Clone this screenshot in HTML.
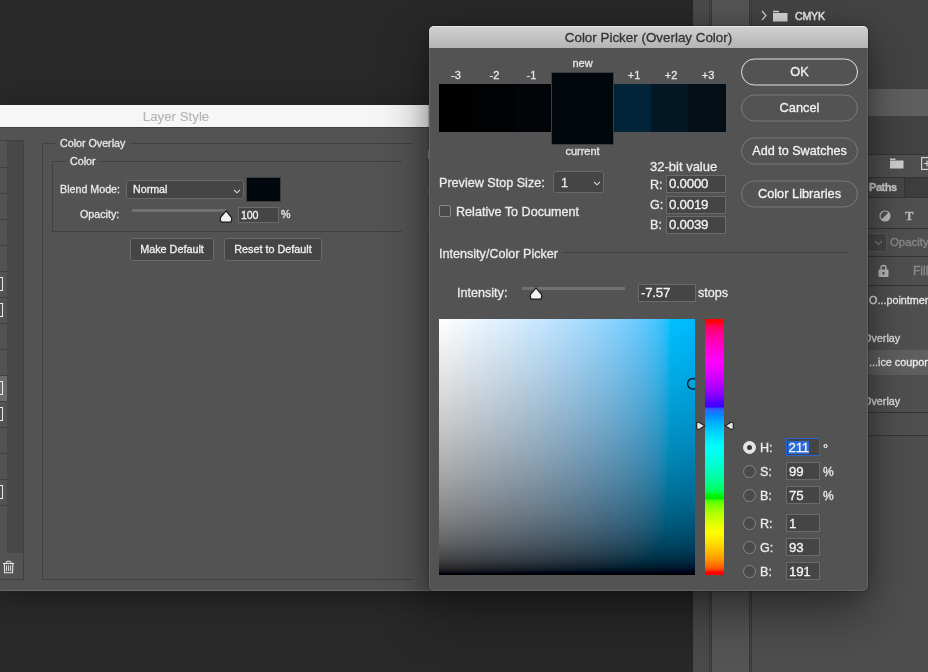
<!DOCTYPE html>
<html><head><meta charset="utf-8"><title>Color Picker</title>
<style>
*{box-sizing:border-box;margin:0;padding:0}
html,body{width:928px;height:672px;overflow:hidden;background:#282828;font-family:"Liberation Sans",sans-serif;font-size:12px;color:#e6e6e6;-webkit-text-stroke:0.3px}
.a{position:absolute}
.t{position:absolute;white-space:nowrap;line-height:14px;height:14px}
.c{text-align:center}
/* right panels */
#rp,#ls,#cp{will-change:transform}
#rp{left:693px;top:0;width:235px;height:672px;background:#4a4a4a;overflow:hidden}
.hl{position:absolute;height:1px;background:#353535}
/* layer style */
#ls{left:0;top:105px;width:440px;height:486px;background:#535353;box-shadow:0 6px 22px rgba(0,0,0,.32);border-bottom:1px solid #6a6a6a}
#lst{left:0;top:0;width:100%;height:22px;background:#f6f6f6}
.ln{position:absolute;background:#414141}
.btn{position:absolute;height:23px;border:1px solid #6b6b6b;border-radius:3px;background:#454545;color:#f0f0f0;text-align:center;line-height:21px;font-size:10.8px}
.fld{position:absolute;background:#454545;border:1px solid #6a6a6a;color:#f4f4f4;font-size:13.3px;letter-spacing:-0.25px;line-height:16px;padding-left:2px;height:18px;white-space:nowrap}
.f2{line-height:18px}
.ls11{font-size:10.7px;color:#e8e8e8}
/* color picker */
#cp{left:429px;top:26px;width:439px;height:565px;background:#535353;border-radius:5px;box-shadow:inset 0 0 0 1px rgba(255,255,255,.1),0 22px 50px rgba(0,0,0,.42),0 2px 22px rgba(0,0,0,.22),0 0 0 1px rgba(0,0,0,.18)}
#cpt{left:0;top:0;width:100%;height:22px;padding-top:1px;border-radius:5px 5px 0 0;background:linear-gradient(#d0d0d0,#b4b4b4);border-top:1px solid #e8e8e8;color:#333;text-align:center;font-size:13.4px;line-height:20px}
.pill{position:absolute;transform:translateY(.5px);left:312px;width:117px;height:27px;border:1px solid #7a7a7a;border-radius:14px;text-align:center;line-height:25px;font-size:12.8px;color:#f2f2f2}
.radio{position:absolute;left:314px;width:13px;height:13px;border-radius:50%;border:1px solid #858585;background:#4a4a4a}
#rows i{display:block;width:256px}
.cpl{font-size:12.6px;color:#ececec}
.sm{font-size:11px;color:#e6e6e6}
.pb{left:-12px;width:15px;height:14px;border:1px solid #eaeaea}
</style></head><body>

<!-- right panels -->
<div class="a" id="rp">
  <div class="a" style="left:16px;top:0;width:3px;height:672px;background:#383838"></div><div class="a" style="left:17px;top:0;width:1px;height:672px;background:#484848"></div>
  <div class="a" style="left:19px;top:0;width:37px;height:672px;background:#545454"></div>
  <div class="a" style="left:56px;top:0;width:3px;height:672px;background:#383838"></div><div class="a" style="left:57px;top:0;width:1px;height:672px;background:#484848"></div>
  <div class="a" style="left:59px;top:0;width:176px;height:154px;background:#434343"></div>
  <div class="hl" style="left:59px;top:30px;width:176px;background:#444"></div>
  <div class="hl" style="left:59px;top:58px;width:176px;background:#444"></div>
  <div class="a" style="left:59px;top:89px;width:176px;height:27px;background:#606060"></div>
  <!-- CMYK row -->
  <svg class="a" style="left:67px;top:10px" width="8" height="11" viewBox="0 0 8 11"><path d="M2 1 L6 5.5 L2 10" fill="none" stroke="#d0d0d0" stroke-width="1.2"/></svg>
  <svg class="a" style="left:80px;top:10px" width="15" height="12" viewBox="0 0 15 12"><path d="M0 0.8h6v1.4h-6z M0 3h14.5v8.5h-14.5z" fill="#d4d4d4"/></svg>
  <div class="t" style="left:102px;top:9px;font-size:10.6px;-webkit-text-stroke:0.5px;color:#e4e4e4;letter-spacing:-.2px">CMYK</div>
  <!-- layers panel -->
  <div class="a" style="left:59px;top:154px;width:176px;height:518px;background:#505050"></div>
  <div class="hl" style="left:59px;top:154px;width:176px"></div>
  <div class="hl" style="left:59px;top:177px;width:176px"></div>
  <div class="a" style="left:59px;top:178px;width:153px;height:19px;background:#474747"></div><div class="a" style="left:211px;top:178px;width:24px;height:19px;background:#3e3e3e"></div>
  <div class="a" style="left:211px;top:178px;width:1px;height:19px;background:#353535"></div>
  <div class="hl" style="left:59px;top:197px;width:176px"></div>
  <div class="hl" style="left:59px;top:228px;width:176px"></div>
  <div class="hl" style="left:59px;top:256px;width:176px"></div>
  <div class="hl" style="left:59px;top:285px;width:176px"></div>
  <div class="a" style="left:59px;top:350px;width:176px;height:25px;background:#606060"></div>
  <div class="hl" style="left:59px;top:412px;width:176px"></div>
  <div class="hl" style="left:59px;top:435px;width:176px"></div>
  <div class="a" style="left:59px;top:436px;width:176px;height:236px;background:#4e4e4e"></div>
  <!-- icons -->
  <svg class="a" style="left:197px;top:158px" width="14" height="11" viewBox="0 0 14 11"><path d="M0 0.5h5.5v1.5h-5.5z M0 2.6h13.5v8h-13.5z" fill="#cfcfcf"/></svg>
  <svg class="a" style="left:228px;top:157px" width="12" height="13" viewBox="0 0 12 13"><rect x=".6" y=".6" width="12" height="11.8" fill="none" stroke="#cfcfcf" stroke-width="1.2"/><path d="M6 3.5v6M3 6.5h6" stroke="#cfcfcf" stroke-width="1.2"/></svg>
  <div class="t" style="left:176px;top:180px;font-size:11px;font-weight:bold;letter-spacing:-.45px;color:#cacaca;-webkit-text-stroke:.35px">Paths</div>
  <svg class="a" style="left:186px;top:210px" width="12" height="12" viewBox="0 0 12 12"><circle cx="6" cy="6" r="5" fill="none" stroke="#bdbdbd" stroke-width="1.2"/><path d="M9.6 2.4 A5 5 0 0 1 2.4 9.6 Z" fill="#bdbdbd"/></svg>
  <div class="t" style="left:212px;top:207px;font-family:'Liberation Serif',serif;font-weight:bold;font-size:12.5px;line-height:18px;height:18px;color:#bdbdbd">T</div>
  <div class="a" style="left:173px;top:233px;width:21px;height:19px;border:1px solid #5c5c5c;border-radius:3px;background:#464646"></div>
  <svg class="a" style="left:181px;top:240px" width="9" height="6" viewBox="0 0 9 6"><path d="M1 1 L4.5 4.5 L8 1" fill="none" stroke="#7d7d7d" stroke-width="1.2"/></svg>
  <div class="t" style="left:197px;top:235px;font-size:11.4px;color:#8c8c8c">Opacity</div>
  <svg class="a" style="left:185px;top:264px" width="11" height="13" viewBox="0 0 11 13"><path d="M3 6V4a2.5 2.5 0 0 1 5 0v2" fill="none" stroke="#b8b8b8" stroke-width="1.5"/><rect x="0.5" y="5.5" width="10" height="7.5" rx="1" fill="#b8b8b8"/><rect x="4.6" y="8" width="1.8" height="2.6" fill="#4a4a4a"/></svg>
  <div class="t" style="left:220px;top:264px;font-size:12px;color:#8c8c8c">Fill:</div>
  <div class="t" style="left:176px;top:293px;font-size:10.8px;color:#ececec">O...pointmen</div>
  <div class="t" style="left:170px;top:331px;font-size:10.8px;color:#e0e0e0">Overlay</div>
  <div class="t" style="left:176px;top:355px;font-size:10.8px;color:#f0f0f0">...ice coupon</div>
  <div class="t" style="left:170px;top:394px;font-size:10.8px;color:#e0e0e0">Overlay</div>
</div>

<!-- Layer Style dialog -->
<div class="a" id="ls">
  <div class="a" id="lst"></div>
  <div class="t c" style="left:101px;width:150px;top:5px;font-size:13.3px;color:#b4b4b4;-webkit-text-stroke:.1px">Layer Style</div>
  <div class="ln" style="left:0;top:22px;width:440px;height:1px;background:#404040"></div>
  <!-- left list -->
  <div class="a" style="left:7px;top:36px;width:16px;height:412px;background:#484848"></div>
  <div class="ln" style="left:0;top:35px;width:24px;height:1px"></div>
  <div class="ln" style="left:23px;top:35px;width:1px;height:440px"></div>
  <div class="ln" style="left:0;top:474px;width:24px;height:1px"></div>
  <div class="a" style="left:0;top:271px;width:7px;height:25px;background:#6b6b6b"></div>
  <div class="ln" style="left:0;top:62px;width:7px;height:1px"></div><div class="ln" style="left:0;top:88px;width:7px;height:1px"></div><div class="ln" style="left:0;top:114px;width:7px;height:1px"></div><div class="ln" style="left:0;top:140px;width:7px;height:1px"></div><div class="ln" style="left:0;top:166px;width:7px;height:1px"></div><div class="ln" style="left:0;top:192px;width:7px;height:1px"></div><div class="ln" style="left:0;top:218px;width:7px;height:1px"></div><div class="ln" style="left:0;top:244px;width:7px;height:1px"></div><div class="ln" style="left:0;top:270px;width:7px;height:1px"></div><div class="ln" style="left:0;top:296px;width:7px;height:1px"></div><div class="ln" style="left:0;top:322px;width:7px;height:1px"></div><div class="ln" style="left:0;top:348px;width:7px;height:1px"></div><div class="ln" style="left:0;top:374px;width:7px;height:1px"></div><div class="ln" style="left:0;top:400px;width:7px;height:1px"></div>
  <!-- plus boxes -->
  <div class="a pb" style="top:172px"></div><div class="a pb" style="top:198px"></div><div class="a pb" style="top:276px"></div><div class="a pb" style="top:302px"></div><div class="a pb" style="top:380px"></div>
  <!-- trash -->
  <svg class="a" style="left:3px;top:455px" width="12" height="14" viewBox="0 0 12 14"><g fill="none" stroke="#e8e8e8"><path d="M0 3.5H11.2" stroke-width="1.1"/><path d="M3.3 3.5V2 Q3.3 1.3 4 1.3H7.3Q8 1.3 8 2V3.5" stroke-width="1"/><path d="M1.4 4 L1.6 12.7H9.6L9.8 4" stroke-width="1.1"/><path d="M3.55 5.3v5.8M5.6 5.3v5.8M7.65 5.3v5.8" stroke-width=".95"/></g></svg>
  <!-- fieldsets -->
  <div class="a" style="left:42px;top:38px;width:371px;height:437px;border:1px solid #414141;border-right:none"></div>
  <div class="a" style="left:55px;top:30px;width:75px;height:16px;background:#535353"></div>
  <div class="t ls11" style="left:60px;top:31px">Color Overlay</div>
  <div class="a" style="left:52px;top:56px;width:350px;height:71px;border:1px solid #414141;border-right:none"></div>
  <div class="a" style="left:66px;top:48px;width:34px;height:16px;background:#535353"></div>
  <div class="t ls11" style="left:70px;top:49px">Color</div>
  <div class="t ls11" style="left:60px;top:77px">Blend Mode:</div>
  <div class="a" style="left:126px;top:75px;width:118px;height:19px;background:#454545;border:1px solid #686868;border-radius:3px"></div>
  <div class="t ls11" style="left:133px;top:77px;color:#f2f2f2">Normal</div>
  <svg class="a" style="left:233px;top:84px" width="8" height="5" viewBox="0 0 8 5"><path d="M1 0.8 L4 3.8 L7 0.8" fill="none" stroke="#e0e0e0" stroke-width="1.1"/></svg>
  <div class="a" style="left:246px;top:72px;width:35px;height:25px;background:#02060d;border:1px solid #3c3c3c"></div>
  <div class="t ls11" style="left:80px;top:102px">Opacity:</div>
  <div class="a" style="left:132px;top:104px;width:94px;height:3px;background:#717171"></div>
  <svg class="a" style="left:219px;top:105px" width="14" height="13" viewBox="0 0 14 13"><path d="M7 0.9 L1.4 7.7 V10.2 Q1.4 12.1 3.4 12.1 H10.6 Q12.6 12.1 12.6 10.2 V7.7 Z" fill="#f0f0f0" stroke="#1c1c1c" stroke-width="1.2" stroke-linejoin="round"/></svg>
  <div class="fld" style="left:238px;top:102px;width:41px;height:16px;font-size:10.7px;line-height:14px">100</div>
  <div class="t ls11" style="left:281px;top:102px">%</div>
  <div class="btn" style="left:130px;top:133px;width:84px">Make Default</div>
  <div class="btn" style="left:224px;top:133px;width:98px">Reset to Default</div>
  <!-- shadow cast by picker -->
  <div class="a" style="left:428px;top:45px;width:1px;height:9px;background:#a4a4a4;border-radius:1px"></div><div class="a" style="left:428px;top:82px;width:1px;height:8px;background:#686868"></div><div class="a" style="left:428px;top:118px;width:1px;height:8px;background:#626262"></div>
</div>

<!-- Color Picker dialog -->
<div class="a" id="cp">
  <div class="a" id="cpt">Color Picker (Overlay Color)</div>
  <!-- swatches -->
  <div class="a" style="left:10px;top:58px;width:38px;height:48px;background:#010102"></div>
  <div class="a" style="left:48px;top:58px;width:37px;height:48px;background:#010203"></div>
  <div class="a" style="left:85px;top:58px;width:37px;height:48px;background:#020408"></div>
  <div class="a" style="left:184px;top:58px;width:38px;height:48px;background:#032339"></div>
  <div class="a" style="left:222px;top:58px;width:37px;height:48px;background:#031623"></div>
  <div class="a" style="left:259px;top:58px;width:38px;height:48px;background:#030e17"></div>
  <div class="a" style="left:122px;top:46px;width:63px;height:73px;background:#02070e;border:1px solid #3d3d3d"></div>
  <div class="t sm c" style="left:10px;width:34px;top:42px">-3</div>
  <div class="t sm c" style="left:48px;width:35px;top:42px">-2</div>
  <div class="t sm c" style="left:85px;width:35px;top:42px">-1</div>
  <div class="t sm c" style="left:186px;width:38px;top:42px">+1</div>
  <div class="t sm c" style="left:223px;width:38px;top:42px">+2</div>
  <div class="t sm c" style="left:260px;width:38px;top:42px">+3</div>
  <div class="t sm c" style="left:122px;width:63px;top:30px">new</div>
  <div class="t sm c" style="left:122px;width:63px;top:118px">current</div>
  <!-- buttons -->
  <div class="pill" style="top:32px;border:1.5px solid #e4e4e4;line-height:24px">OK</div>
  <div class="pill" style="top:68px;line-height:24px">Cancel</div>
  <div class="pill" style="top:111px;font-size:12.6px">Add to Swatches</div>
  <div class="pill" style="top:154px;line-height:24px">Color Libraries</div>
  <!-- preview stop -->
  <div class="t cpl" style="left:10px;top:150px">Preview Stop Size:</div>
  <div class="a" style="left:124px;top:145px;width:51px;height:22px;background:#454545;border:1px solid #6a6a6a;border-radius:3px"></div>
  <div class="t cpl" style="left:132px;top:150px">1</div>
  <svg class="a" style="left:164px;top:155px" width="8" height="5" viewBox="0 0 8 5"><path d="M1 0.8 L4 3.8 L7 0.8" fill="none" stroke="#e0e0e0" stroke-width="1.1"/></svg>
  <div class="a" style="left:10px;top:179px;width:12px;height:12px;border:1px solid #8a8a8a;border-radius:2px;background:#4a4a4a"></div>
  <div class="t cpl" style="left:27px;top:179px">Relative To Document</div>
  <div class="t cpl" style="left:221px;top:134px;font-size:13px">32-bit value</div>
  <div class="t cpl" style="left:221px;top:152px">R:</div>
  <div class="t cpl" style="left:221px;top:172px">G:</div>
  <div class="t cpl" style="left:221px;top:192px">B:</div>
  <div class="fld" style="left:237px;top:149px;width:60px">0.0000</div>
  <div class="fld" style="left:237px;top:170px;width:60px">0.0019</div>
  <div class="fld" style="left:237px;top:190px;width:60px">0.0039</div>
  <!-- section -->
  <div class="t cpl" style="left:10px;top:221px">Intensity/Color Picker</div>
  <div class="a" style="left:134px;top:226px;width:285px;height:1px;background:#414141"></div>
  <div class="t cpl" style="left:28px;top:260px">Intensity:</div>
  <div class="a" style="left:93px;top:261px;width:103px;height:3px;background:#717171"></div>
  <svg class="a" style="left:100px;top:261px" width="14" height="13" viewBox="0 0 14 13"><path d="M7 0.9 L1.4 7.7 V10.2 Q1.4 12.1 3.4 12.1 H10.6 Q12.6 12.1 12.6 10.2 V7.7 Z" fill="#f0f0f0" stroke="#1c1c1c" stroke-width="1.2" stroke-linejoin="round"/></svg>
  <div class="fld" style="left:209px;top:258px;width:58px">-7.57</div>
  <div class="t cpl" style="left:269px;top:260px">stops</div>
  <!-- field + hue -->
  <div class="a" id="field" style="left:10px;top:293px;width:256px;height:256px;overflow:hidden;background:#000"><div class="a" id="rows" style="left:0;top:0;width:256px;height:256px"><i style="height:4px;background:linear-gradient(90deg,#fefefe 0.0%,#f1f8fe 10.0%,#e4f2fe 20.0%,#d5ecfe 30.0%,#c4e5fe 40.0%,#b2defe 50.0%,#9cd7fe 60.0%,#82d0fe 70.0%,#7bcefe 72.4%,#61c9fe 79.4%,#5fc8fe 80.0%,#49c5fe 84.4%,#33c2fe 87.4%,#1ec1fe 89.2%,#0fc0fe 90.0%,#00c0fe 90.4%,#00b7fe 100.0%)"></i><i style="height:4px;background:linear-gradient(90deg,#fcfcfc 0.0%,#f0f6fc 10.0%,#e2f0fc 20.0%,#d3eafc 30.0%,#c3e4fc 40.0%,#b0ddfc 50.0%,#9bd6fc 60.0%,#81cffc 70.0%,#7acdfc 72.4%,#61c7fc 79.4%,#5ec7fc 80.0%,#48c3fc 84.4%,#32c1fc 87.4%,#1ebffc 89.2%,#0fbffc 90.0%,#00befc 90.4%,#00b6fc 100.0%)"></i><i style="height:4px;background:linear-gradient(90deg,#fbfbfb 0.0%,#eef5fb 10.0%,#e0effb 20.0%,#d2e8fb 30.0%,#c1e2fb 40.0%,#afdbfb 50.0%,#9ad4fb 60.0%,#80cdfb 70.0%,#79cbfb 72.4%,#60c6fb 79.4%,#5ec5fb 80.0%,#47c2fb 84.4%,#32bffb 87.4%,#1ebefb 89.2%,#0fbdfb 90.0%,#00bdfb 90.4%,#00b5fb 100.0%)"></i><i style="height:4px;background:linear-gradient(90deg,#f9f9f9 0.0%,#ecf3f9 10.0%,#dfedf9 20.0%,#d0e7f9 30.0%,#c0e0f9 40.0%,#aedaf9 50.0%,#99d3f9 60.0%,#7fccf9 70.0%,#78caf9 72.4%,#5fc4f9 79.4%,#5dc4f9 80.0%,#47c0f9 84.4%,#32bef9 87.4%,#1dbdf9 89.2%,#0ebcf9 90.0%,#00bcf9 90.4%,#00b3f9 100.0%)"></i><i style="height:4px;background:linear-gradient(90deg,#f7f7f7 0.0%,#eaf1f7 10.0%,#ddebf7 20.0%,#cfe5f7 30.0%,#bfdff7 40.0%,#add8f7 50.0%,#98d1f7 60.0%,#7ecaf7 70.0%,#77c8f7 72.4%,#5ec3f7 79.4%,#5cc2f7 80.0%,#46bff7 84.4%,#31bdf7 87.4%,#1dbbf7 89.2%,#0ebbf7 90.0%,#00baf7 90.4%,#00b2f7 100.0%)"></i><i style="height:4px;background:linear-gradient(90deg,#f5f5f5 0.0%,#e9eff5 10.0%,#dbe9f5 20.0%,#cde3f5 30.0%,#bdddf5 40.0%,#abd6f5 50.0%,#97d0f5 60.0%,#7dc8f5 70.0%,#76c7f5 72.4%,#5ec1f5 79.4%,#5bc1f5 80.0%,#46bef5 84.4%,#31bbf5 87.4%,#1dbaf5 89.2%,#0db9f5 90.0%,#00b9f5 90.4%,#00b1f5 100.0%)"></i><i style="height:4px;background:linear-gradient(90deg,#f3f3f3 0.0%,#e7eef3 10.0%,#dae8f3 20.0%,#cbe2f3 30.0%,#bcdbf3 40.0%,#aad5f3 50.0%,#95cef3 60.0%,#7cc7f3 70.0%,#75c5f3 72.4%,#5dc0f3 79.4%,#5abff3 80.0%,#45bcf3 84.4%,#30baf3 87.4%,#1cb8f3 89.2%,#0db8f3 90.0%,#00b7f3 90.4%,#00aff3 100.0%)"></i><i style="height:4px;background:linear-gradient(90deg,#f1f1f1 0.0%,#e5ecf1 10.0%,#d8e6f1 20.0%,#cae0f1 30.0%,#badaf1 40.0%,#a8d3f1 50.0%,#94ccf1 60.0%,#7bc5f1 70.0%,#74c4f1 72.4%,#5cbef1 79.4%,#5abef1 80.0%,#44bbf1 84.4%,#30b8f1 87.4%,#1cb7f1 89.2%,#0db6f1 90.0%,#00b6f1 90.4%,#00aef1 100.0%)"></i><i style="height:4px;background:linear-gradient(90deg,#efefef 0.0%,#e3eaef 10.0%,#d6e4ef 20.0%,#c8deef 30.0%,#b9d8ef 40.0%,#a7d1ef 50.0%,#93cbef 60.0%,#7ac4ef 70.0%,#73c2ef 72.4%,#5bbdef 79.4%,#59bcef 80.0%,#44b9ef 84.4%,#2fb7ef 87.4%,#1cb5ef 89.2%,#0cb5ef 90.0%,#00b4ef 90.4%,#00adef 100.0%)"></i><i style="height:4px;background:linear-gradient(90deg,#ededee 0.0%,#e1e8ee 10.0%,#d5e2ee 20.0%,#c7dcee 30.0%,#b7d6ee 40.0%,#a6d0ee 50.0%,#92c9ee 60.0%,#79c2ee 70.0%,#72c0ee 72.4%,#5bbbee 79.4%,#58bbee 80.0%,#43b8ee 84.4%,#2fb5ee 87.4%,#1cb4ee 89.2%,#0cb3ee 90.0%,#00b3ee 90.4%,#00abee 100.0%)"></i><i style="height:4px;background:linear-gradient(90deg,#ececec 0.0%,#e0e6ec 10.0%,#d3e0ec 20.0%,#c5daec 30.0%,#b6d4ec 40.0%,#a4ceec 50.0%,#90c7ec 60.0%,#78c1ec 70.0%,#71bfec 72.3%,#5abaec 79.3%,#57b9ec 80.0%,#43b6ec 84.3%,#2eb4ec 87.3%,#1bb2ec 89.1%,#0cb2ec 89.9%,#00b1ec 90.3%,#00aaec 100.0%)"></i><i style="height:4px;background:linear-gradient(90deg,#eaeaea 0.0%,#dee4ea 10.0%,#d1deea 20.0%,#c3d9ea 30.0%,#b4d3ea 40.0%,#a3ccea 50.0%,#8fc6ea 60.0%,#77bfea 70.0%,#70bdea 72.3%,#59b8ea 79.3%,#56b8ea 80.0%,#42b5ea 84.3%,#2eb2ea 87.3%,#1bb1ea 89.1%,#0cb0ea 89.9%,#00b0ea 90.3%,#00a8ea 100.0%)"></i><i style="height:4px;background:linear-gradient(90deg,#e8e8e8 0.0%,#dce2e8 10.0%,#cfdde8 20.0%,#c2d7e8 30.0%,#b2d1e8 40.0%,#a1cbe8 50.0%,#8ec4e8 60.0%,#76bde8 70.0%,#6fbce8 72.3%,#58b7e8 79.3%,#55b6e8 80.0%,#41b3e8 84.3%,#2db1e8 87.3%,#1bafe8 89.1%,#0cafe8 89.9%,#00aee8 90.3%,#00a7e8 100.0%)"></i><i style="height:4px;background:linear-gradient(90deg,#e6e6e6 0.0%,#dae0e6 10.0%,#cddbe6 20.0%,#c0d5e6 30.0%,#b1cfe6 40.0%,#a0c9e6 50.0%,#8dc2e6 60.0%,#75bce6 70.0%,#6ebae6 72.3%,#57b5e6 79.3%,#55b5e6 80.0%,#41b1e6 84.3%,#2dafe6 87.3%,#1aaee6 89.1%,#0bade6 89.9%,#00ade6 90.3%,#00a5e6 100.0%)"></i><i style="height:4px;background:linear-gradient(90deg,#e4e4e4 0.0%,#d8dee4 10.0%,#ccd9e4 20.0%,#bed3e4 30.0%,#afcde4 40.0%,#9fc7e4 50.0%,#8bc1e4 60.0%,#74bae4 70.0%,#6db8e4 72.3%,#56b3e4 79.3%,#54b3e4 80.0%,#40b0e4 84.3%,#2caee4 87.3%,#1aace4 89.1%,#0bace4 89.9%,#00abe4 90.3%,#00a4e4 100.0%)"></i><i style="height:4px;background:linear-gradient(90deg,#e1e1e2 0.0%,#d6dce2 10.0%,#cad7e2 20.0%,#bcd1e2 30.0%,#aecbe2 40.0%,#9dc5e2 50.0%,#8abfe2 60.0%,#73b8e2 70.0%,#6cb7e2 72.3%,#56b2e2 79.3%,#53b1e2 80.0%,#3faee2 84.3%,#2cace2 87.3%,#1aabe2 89.1%,#0baae2 89.9%,#00aae2 90.3%,#00a2e2 100.0%)"></i><i style="height:4px;background:linear-gradient(90deg,#dfdfdf 0.0%,#d4dadf 10.0%,#c8d5df 20.0%,#bbcfdf 30.0%,#acc9df 40.0%,#9cc3df 50.0%,#89bddf 60.0%,#71b6df 70.0%,#6bb5df 72.3%,#55b0df 79.3%,#52b0df 80.0%,#3faddf 84.3%,#2baadf 87.3%,#19a9df 89.1%,#0ba8df 89.9%,#00a8df 90.3%,#00a1df 100.0%)"></i><i style="height:4px;background:linear-gradient(90deg,#dddddd 0.0%,#d2d8dd 10.0%,#c6d3dd 20.0%,#b9cddd 30.0%,#aac7dd 40.0%,#9ac1dd 50.0%,#87bbdd 60.0%,#70b5dd 70.0%,#6ab3dd 72.2%,#54aedd 79.2%,#51aedd 80.0%,#3eabdd 84.2%,#2ba9dd 87.2%,#19a7dd 89.0%,#0ba7dd 89.8%,#00a6dd 90.2%,#009fdd 100.0%)"></i><i style="height:4px;background:linear-gradient(90deg,#dbdbdb 0.0%,#d0d6db 10.0%,#c4d1db 20.0%,#b7cbdb 30.0%,#a9c5db 40.0%,#98c0db 50.0%,#86b9db 60.0%,#6fb3db 70.0%,#69b1db 72.2%,#53addb 79.2%,#50acdb 80.0%,#3da9db 84.2%,#2aa7db 87.2%,#19a6db 89.0%,#0aa5db 89.8%,#00a5db 90.2%,#009ddb 100.0%)"></i><i style="height:4px;background:linear-gradient(90deg,#d9d9d9 0.0%,#ced4d9 10.0%,#c2cfd9 20.0%,#b5c9d9 30.0%,#a7c3d9 40.0%,#97bed9 50.0%,#84b8d9 60.0%,#6eb1d9 70.0%,#68b0d9 72.2%,#52abd9 79.2%,#4faad9 80.0%,#3da7d9 84.2%,#2aa5d9 87.2%,#18a4d9 89.0%,#0aa3d9 89.8%,#00a3d9 90.2%,#009cd9 100.0%)"></i><i style="height:4px;background:linear-gradient(90deg,#d7d7d7 0.0%,#ccd2d7 10.0%,#c0ccd7 20.0%,#b3c7d7 30.0%,#a5c1d7 40.0%,#95bcd7 50.0%,#83b6d7 60.0%,#6dafd7 70.0%,#67aed7 72.2%,#51a9d7 79.2%,#4ea9d7 80.0%,#3ca6d7 84.2%,#29a4d7 87.2%,#18a2d7 89.0%,#0aa2d7 89.8%,#00a2d7 90.2%,#009ad7 100.0%)"></i><i style="height:4px;background:linear-gradient(90deg,#d5d5d5 0.0%,#cad0d5 10.0%,#becad5 20.0%,#b1c5d5 30.0%,#a3bfd5 40.0%,#94bad5 50.0%,#82b4d5 60.0%,#6badd5 70.0%,#66acd5 72.2%,#50a7d5 79.2%,#4da7d5 80.0%,#3ba4d5 84.2%,#29a2d5 87.2%,#17a1d5 89.0%,#0aa0d5 89.8%,#00a0d5 90.2%,#0099d5 100.0%)"></i><i style="height:4px;background:linear-gradient(90deg,#d2d2d2 0.0%,#c8cdd2 10.0%,#bcc8d2 20.0%,#afc3d2 30.0%,#a2bdd2 40.0%,#92b8d2 50.0%,#80b2d2 60.0%,#6aacd2 70.0%,#65aad2 72.2%,#4fa6d2 79.2%,#4ca5d2 80.0%,#3aa2d2 84.2%,#28a0d2 87.2%,#179fd2 89.0%,#099ed2 89.8%,#009ed2 90.2%,#0097d2 100.0%)"></i><i style="height:4px;background:linear-gradient(90deg,#d0d0d0 0.0%,#c5cbd0 10.0%,#bac6d0 20.0%,#aec1d0 30.0%,#a0bbd0 40.0%,#90b6d0 50.0%,#7fb0d0 60.0%,#69aad0 70.0%,#63a8d0 72.1%,#4ea4d0 79.1%,#4ba3d0 80.0%,#3aa0d0 84.1%,#289ed0 87.1%,#179dd0 88.9%,#099dd0 89.7%,#009cd0 90.1%,#0095d0 100.0%)"></i><i style="height:4px;background:linear-gradient(90deg,#cecece 0.0%,#c3c9ce 10.0%,#b8c4ce 20.0%,#acbfce 30.0%,#9eb9ce 40.0%,#8fb4ce 50.0%,#7daece 60.0%,#68a8ce 70.0%,#62a6ce 72.1%,#4da2ce 79.1%,#4aa1ce 80.0%,#399fce 84.1%,#279dce 87.1%,#169bce 88.9%,#099bce 89.7%,#009bce 90.1%,#0093ce 100.0%)"></i><i style="height:4px;background:linear-gradient(90deg,#cbcbcc 0.0%,#c1c6cc 10.0%,#b6c2cc 20.0%,#aabccc 30.0%,#9cb7cc 40.0%,#8db2cc 50.0%,#7caccc 60.0%,#66a6cc 70.0%,#61a4cc 72.1%,#4ca0cc 79.1%,#499fcc 80.0%,#389dcc 84.1%,#279bcc 87.1%,#169acc 88.9%,#0999cc 89.7%,#0299cc 90.0%,#0092cc 100.0%)"></i><i style="height:4px;background:linear-gradient(90deg,#c9c9c9 0.0%,#bfc4c9 10.0%,#b4bfc9 20.0%,#a8bac9 30.0%,#9ab5c9 40.0%,#8bafc9 50.0%,#7aaac9 60.0%,#65a4c9 70.0%,#60a3c9 72.1%,#4b9ec9 79.1%,#489ec9 80.0%,#379bc9 84.1%,#2699c9 87.1%,#1698c9 88.9%,#0997c9 89.7%,#0197c9 90.0%,#0090c9 100.0%)"></i><i style="height:4px;background:linear-gradient(90deg,#c6c6c7 0.0%,#bcc2c7 10.0%,#b1bdc7 20.0%,#a5b8c7 30.0%,#98b3c7 40.0%,#8aadc7 50.0%,#78a8c7 60.0%,#64a2c7 70.0%,#5fa1c7 72.0%,#4a9cc7 79.0%,#479cc7 80.0%,#3799c7 84.0%,#2597c7 87.0%,#1596c7 88.8%,#0895c7 89.6%,#0195c7 90.0%,#008ec7 100.0%)"></i><i style="height:4px;background:linear-gradient(90deg,#c4c4c4 0.0%,#babfc4 10.0%,#afbbc4 20.0%,#a3b6c4 30.0%,#96b0c4 40.0%,#88abc4 50.0%,#77a6c4 60.0%,#62a0c4 70.0%,#5d9ec4 72.0%,#499ac4 79.0%,#469ac4 80.0%,#3697c4 84.0%,#2595c4 87.0%,#1594c4 88.8%,#0893c4 89.6%,#0093c4 90.0%,#008cc4 100.0%)"></i><i style="height:4px;background:linear-gradient(90deg,#c1c1c2 0.0%,#b8bdc2 10.0%,#adb8c2 20.0%,#a1b3c2 30.0%,#94aec2 40.0%,#86a9c2 50.0%,#75a3c2 60.0%,#619ec2 70.0%,#5c9cc2 72.0%,#4898c2 79.0%,#4598c2 80.0%,#3595c2 84.0%,#2493c2 87.0%,#1492c2 88.8%,#0891c2 89.6%,#0091c2 90.0%,#008ac2 100.0%)"></i><i style="height:4px;background:linear-gradient(90deg,#bfbfbf 0.0%,#b5babf 10.0%,#abb6bf 20.0%,#9fb1bf 30.0%,#92acbf 40.0%,#84a7bf 50.0%,#74a1bf 60.0%,#5f9bbf 70.0%,#5b9abf 72.0%,#4796bf 79.0%,#4495bf 80.0%,#3493bf 84.0%,#2491bf 87.0%,#1490bf 88.8%,#088fbf 89.6%,#008fbf 90.0%,#0089bf 100.0%)"></i><i style="height:4px;background:linear-gradient(90deg,#bcbcbd 0.0%,#b3b8bd 10.0%,#a8b3bd 20.0%,#9daebd 30.0%,#90a9bd 40.0%,#82a4bd 50.0%,#729fbd 60.0%,#5e99bd 70.0%,#5998bd 71.9%,#4694bd 78.9%,#4393bd 80.0%,#3391bd 83.9%,#238fbd 86.9%,#138ebd 88.7%,#078dbd 89.5%,#008dbd 89.9%,#0087bd 100.0%)"></i><i style="height:2px;background:linear-gradient(90deg,#bababb 0.0%,#b1b6bb 10.0%,#a6b1bb 20.0%,#9badbb 30.0%,#8fa8bb 40.0%,#81a3bb 50.0%,#719dbb 60.0%,#5d98bb 70.0%,#5897bb 71.9%,#4592bb 78.9%,#4292bb 80.0%,#338fbb 83.9%,#238ebb 86.9%,#138cbb 88.7%,#078cbb 89.5%,#008cbb 89.9%,#0085bb 100.0%)"></i><i style="height:2px;background:linear-gradient(90deg,#b9b9b9 0.0%,#afb5b9 10.0%,#a5b0b9 20.0%,#9aabb9 30.0%,#8ea6b9 40.0%,#80a1b9 50.0%,#709cb9 60.0%,#5c97b9 70.0%,#5895b9 71.9%,#4591b9 78.9%,#4191b9 80.0%,#328eb9 83.9%,#228db9 86.9%,#138bb9 88.7%,#078bb9 89.5%,#008bb9 89.9%,#0084b9 100.0%)"></i><i style="height:2px;background:linear-gradient(90deg,#b8b8b8 0.0%,#aeb3b8 10.0%,#a4afb8 20.0%,#99aab8 30.0%,#8da5b8 40.0%,#7fa0b8 50.0%,#6f9bb8 60.0%,#5b95b8 70.0%,#5794b8 71.9%,#4490b8 78.9%,#4190b8 80.0%,#328db8 83.9%,#228cb8 86.9%,#138ab8 88.7%,#078ab8 89.5%,#008ab8 89.9%,#0083b8 100.0%)"></i><i style="height:2px;background:linear-gradient(90deg,#b6b6b7 0.0%,#adb2b7 10.0%,#a3adb7 20.0%,#98a9b7 30.0%,#8ca4b7 40.0%,#7e9fb7 50.0%,#6e9ab7 60.0%,#5b94b7 70.0%,#5693b7 71.8%,#448fb7 78.8%,#408fb7 80.0%,#328cb7 83.8%,#228ab7 86.8%,#1289b7 88.6%,#0789b7 89.4%,#0089b7 89.8%,#0082b7 100.0%)"></i><i style="height:2px;background:linear-gradient(90deg,#b5b5b5 0.0%,#acb1b5 10.0%,#a1acb5 20.0%,#97a8b5 30.0%,#8aa3b5 40.0%,#7d9eb5 50.0%,#6d99b5 60.0%,#5a93b5 70.0%,#5692b5 71.8%,#438eb5 78.8%,#408db5 80.0%,#318bb5 83.8%,#2189b5 86.8%,#1288b5 88.6%,#0788b5 89.4%,#0088b5 89.8%,#0081b5 100.0%)"></i><i style="height:2px;background:linear-gradient(90deg,#b4b4b4 0.0%,#aaafb4 10.0%,#a0abb4 20.0%,#95a6b4 30.0%,#89a1b4 40.0%,#7c9db4 50.0%,#6c97b4 60.0%,#5992b4 70.0%,#5591b4 71.8%,#438db4 78.8%,#3f8cb4 80.0%,#318ab4 83.8%,#2188b4 86.8%,#1287b4 88.6%,#0787b4 89.4%,#0086b4 89.8%,#0080b4 100.0%)"></i><i style="height:2px;background:linear-gradient(90deg,#b2b2b2 0.0%,#a9aeb2 10.0%,#9fa9b2 20.0%,#94a5b2 30.0%,#88a0b2 40.0%,#7b9bb2 50.0%,#6b96b2 60.0%,#5891b2 70.0%,#5490b2 71.8%,#428cb2 78.8%,#3e8bb2 80.0%,#3089b2 83.8%,#2187b2 86.8%,#1286b2 88.6%,#0786b2 89.4%,#0085b2 89.8%,#007fb2 100.0%)"></i><i style="height:2px;background:linear-gradient(90deg,#b1b1b1 0.0%,#a8acb1 10.0%,#9ea8b1 20.0%,#93a4b1 30.0%,#879fb1 40.0%,#7a9ab1 50.0%,#6a95b1 60.0%,#5790b1 70.0%,#548fb1 71.8%,#428bb1 78.8%,#3e8ab1 80.0%,#3088b1 83.8%,#2086b1 86.8%,#1285b1 88.6%,#0685b1 89.4%,#0084b1 89.8%,#007eb1 100.0%)"></i><i style="height:2px;background:linear-gradient(90deg,#afafb0 0.0%,#a6abb0 10.0%,#9ca7b0 20.0%,#92a2b0 30.0%,#869eb0 40.0%,#7999b0 50.0%,#6994b0 60.0%,#578eb0 70.0%,#538db0 71.7%,#418ab0 78.7%,#3d89b0 80.0%,#2f87b0 83.7%,#2085b0 86.7%,#1184b0 88.5%,#0683b0 89.3%,#0083b0 89.7%,#007db0 100.0%)"></i><i style="height:2px;background:linear-gradient(90deg,#aeaeae 0.0%,#a5aaae 10.0%,#9ba5ae 20.0%,#91a1ae 30.0%,#859cae 40.0%,#7897ae 50.0%,#6992ae 60.0%,#568dae 70.0%,#528cae 71.7%,#4088ae 78.7%,#3c88ae 80.0%,#2f86ae 83.7%,#2084ae 86.7%,#1183ae 88.5%,#0682ae 89.3%,#0082ae 89.7%,#007cae 100.0%)"></i><i style="height:2px;background:linear-gradient(90deg,#acacad 0.0%,#a3a8ad 10.0%,#9aa4ad 20.0%,#8fa0ad 30.0%,#849bad 40.0%,#7796ad 50.0%,#6891ad 60.0%,#558cad 70.0%,#518bad 71.7%,#4087ad 78.7%,#3c87ad 80.0%,#2e84ad 83.7%,#1f83ad 86.7%,#1182ad 88.5%,#0681ad 89.3%,#0081ad 89.7%,#0081ad 90.0%,#007bad 100.0%)"></i><i style="height:2px;background:linear-gradient(90deg,#ababab 0.0%,#a2a7ab 10.0%,#98a3ab 20.0%,#8e9eab 30.0%,#839aab 40.0%,#7695ab 50.0%,#6790ab 60.0%,#548bab 70.0%,#518aab 71.7%,#3f86ab 78.7%,#3b85ab 80.0%,#2e83ab 83.7%,#1f82ab 86.7%,#1181ab 88.5%,#0680ab 89.3%,#0080ab 89.7%,#0080ab 90.0%,#007aab 100.0%)"></i><i style="height:2px;background:linear-gradient(90deg,#a9a9aa 0.0%,#a1a5aa 10.0%,#97a1aa 20.0%,#8d9daa 30.0%,#8198aa 40.0%,#7594aa 50.0%,#668faa 60.0%,#538aaa 70.0%,#5089aa 71.6%,#3e85aa 78.6%,#3a84aa 80.0%,#2d82aa 83.6%,#1f80aa 86.6%,#107faa 88.4%,#067faa 89.2%,#007faa 89.6%,#007eaa 90.0%,#0078aa 100.0%)"></i><i style="height:2px;background:linear-gradient(90deg,#a8a8a8 0.0%,#9fa4a8 10.0%,#96a0a8 20.0%,#8b9ba8 30.0%,#8097a8 40.0%,#7392a8 50.0%,#658da8 60.0%,#5388a8 70.0%,#4f87a8 71.6%,#3e84a8 78.6%,#3a83a8 80.0%,#2d81a8 83.6%,#1e7fa8 86.6%,#107ea8 88.4%,#067ea8 89.2%,#007ea8 89.6%,#007da8 90.0%,#0077a8 100.0%)"></i><i style="height:2px;background:linear-gradient(90deg,#a6a6a7 0.0%,#9ea2a7 10.0%,#949ea7 20.0%,#8a9aa7 30.0%,#7f95a7 40.0%,#7291a7 50.0%,#648ca7 60.0%,#5287a7 70.0%,#4e86a7 71.6%,#3d82a7 78.6%,#3982a7 80.0%,#2c80a7 83.6%,#1e7ea7 86.6%,#107da7 88.4%,#067da7 89.2%,#007ca7 89.6%,#007ca7 90.0%,#0076a7 100.0%)"></i><i style="height:2px;background:linear-gradient(90deg,#a5a5a5 0.0%,#9ca1a5 10.0%,#939da5 20.0%,#8998a5 30.0%,#7e94a5 40.0%,#718fa5 50.0%,#638ba5 60.0%,#5186a5 70.0%,#4e85a5 71.6%,#3d81a5 78.6%,#3880a5 80.0%,#2c7fa5 83.6%,#1d7da5 86.6%,#107ca5 88.4%,#067ba5 89.2%,#007ba5 89.6%,#007ba5 90.0%,#0075a5 100.0%)"></i><i style="height:2px;background:linear-gradient(90deg,#a3a3a4 0.0%,#9b9fa4 10.0%,#919ba4 20.0%,#8797a4 30.0%,#7c93a4 40.0%,#708ea4 50.0%,#6289a4 60.0%,#5084a4 70.0%,#4d84a4 71.5%,#3c80a4 78.5%,#387fa4 80.0%,#2b7da4 83.5%,#1d7ca4 86.5%,#0f7ba4 88.3%,#057aa4 89.1%,#007aa4 89.5%,#007aa4 90.0%,#0074a4 100.0%)"></i><i style="height:2px;background:linear-gradient(90deg,#a2a2a2 0.0%,#999ea2 10.0%,#909aa2 20.0%,#8695a2 30.0%,#7b91a2 40.0%,#6f8da2 50.0%,#6188a2 60.0%,#4f83a2 70.0%,#4c82a2 71.5%,#3b7fa2 78.5%,#377ea2 80.0%,#2b7ca2 83.5%,#1d7aa2 86.5%,#0f79a2 88.3%,#0579a2 89.1%,#0079a2 89.5%,#0078a2 90.0%,#0073a2 100.0%)"></i><i style="height:2px;background:linear-gradient(90deg,#a0a0a0 0.0%,#989ca0 10.0%,#8f98a0 20.0%,#8594a0 30.0%,#7a90a0 40.0%,#6e8ba0 50.0%,#6087a0 60.0%,#4e82a0 70.0%,#4b81a0 71.5%,#3b7da0 78.5%,#367da0 80.0%,#2a7ba0 83.5%,#1c79a0 86.5%,#0f78a0 88.3%,#0578a0 89.1%,#0078a0 89.5%,#0077a0 90.0%,#0071a0 100.0%)"></i><i style="height:2px;background:linear-gradient(90deg,#9e9e9f 0.0%,#969b9f 10.0%,#8d979f 20.0%,#83929f 30.0%,#798e9f 40.0%,#6d8a9f 50.0%,#5e859f 60.0%,#4d809f 70.0%,#4a809f 71.4%,#3a7c9f 78.4%,#357b9f 80.0%,#2a799f 83.4%,#1c789f 86.4%,#0f779f 88.2%,#05769f 89.0%,#00769f 89.4%,#00769f 90.0%,#00709f 100.0%)"></i><i style="height:2px;background:linear-gradient(90deg,#9d9d9d 0.0%,#94999d 10.0%,#8c959d 20.0%,#82919d 30.0%,#778d9d 40.0%,#6b889d 50.0%,#5d849d 60.0%,#4c7f9d 70.0%,#4a7e9d 71.4%,#397b9d 78.4%,#357a9d 80.0%,#29789d 83.4%,#1b779d 86.4%,#0e769d 88.2%,#05759d 89.0%,#00759d 89.4%,#00759d 90.0%,#006f9d 100.0%)"></i><i style="height:2px;background:linear-gradient(90deg,#9b9b9c 0.0%,#93979c 10.0%,#8a939c 20.0%,#818f9c 30.0%,#768b9c 40.0%,#6a879c 50.0%,#5c829c 60.0%,#4b7e9c 70.0%,#497d9c 71.4%,#39799c 78.4%,#34799c 80.0%,#29779c 83.4%,#1b759c 86.4%,#0e749c 88.2%,#05749c 89.0%,#00749c 89.4%,#00739c 90.0%,#006e9c 100.0%)"></i><i style="height:2px;background:linear-gradient(90deg,#99999a 0.0%,#91969a 10.0%,#89929a 20.0%,#7f8e9a 30.0%,#758a9a 40.0%,#69859a 50.0%,#5b819a 60.0%,#4a7c9a 70.0%,#487c9a 71.3%,#38789a 78.3%,#33779a 80.0%,#28769a 83.3%,#1b749a 86.3%,#0e739a 88.1%,#05739a 88.9%,#00729a 89.3%,#00729a 90.0%,#006d9a 100.0%)"></i><i style="height:2px;background:linear-gradient(90deg,#989898 0.0%,#909498 10.0%,#879098 20.0%,#7e8c98 30.0%,#738898 40.0%,#688498 50.0%,#5a7f98 60.0%,#497b98 70.0%,#477a98 71.3%,#377798 78.3%,#327698 80.0%,#287498 83.3%,#1a7398 86.3%,#0d7298 88.1%,#057198 88.9%,#007198 89.3%,#007198 90.0%,#006b98 100.0%)"></i><i style="height:2px;background:linear-gradient(90deg,#969696 0.0%,#8e9296 10.0%,#858e96 20.0%,#7c8b96 30.0%,#728696 40.0%,#668296 50.0%,#597e96 60.0%,#487996 70.0%,#467996 71.2%,#367596 78.2%,#327496 80.0%,#277396 83.2%,#1a7196 86.2%,#0d7096 88.0%,#047096 88.8%,#007096 89.2%,#006f96 90.0%,#006a96 100.0%)"></i><i style="height:2px;background:linear-gradient(90deg,#949495 0.0%,#8c9095 10.0%,#848d95 20.0%,#7b8995 30.0%,#708595 40.0%,#658195 50.0%,#587c95 60.0%,#477895 70.0%,#457795 71.2%,#367495 78.2%,#317395 80.0%,#277195 83.2%,#197095 86.2%,#0d6f95 88.0%,#046f95 88.8%,#006e95 89.2%,#006e95 90.0%,#006995 100.0%)"></i><i style="height:2px;background:linear-gradient(90deg,#929293 0.0%,#8b8f93 10.0%,#828b93 20.0%,#798793 30.0%,#6f8393 40.0%,#647f93 50.0%,#577b93 60.0%,#467693 70.0%,#447693 71.1%,#357293 78.1%,#307293 80.0%,#267093 83.1%,#196f93 86.1%,#0d6e93 87.9%,#046d93 88.7%,#006d93 89.1%,#006d93 90.0%,#006793 100.0%)"></i><i style="height:2px;background:linear-gradient(90deg,#909091 0.0%,#898d91 10.0%,#818991 20.0%,#788591 30.0%,#6e8291 40.0%,#627d91 50.0%,#557991 60.0%,#457591 70.0%,#437491 71.1%,#347191 78.1%,#2f7091 80.0%,#256f91 83.1%,#196d91 86.1%,#0c6c91 87.9%,#046c91 88.7%,#006c91 89.1%,#006b91 90.0%,#006691 100.0%)"></i><i style="height:2px;background:linear-gradient(90deg,#8f8f8f 0.0%,#878b8f 10.0%,#7f878f 20.0%,#76848f 30.0%,#6c808f 40.0%,#617c8f 50.0%,#54788f 60.0%,#44738f 70.0%,#42738f 71.0%,#346f8f 78.0%,#2e6f8f 80.0%,#256d8f 83.0%,#186c8f 86.0%,#0c6b8f 87.8%,#046a8f 88.6%,#006a8f 89.0%,#006a8f 90.0%,#00648f 100.0%)"></i><i style="height:2px;background:linear-gradient(90deg,#8d8d8d 0.0%,#85898d 10.0%,#7d868d 20.0%,#74828d 30.0%,#6b7e8d 40.0%,#607a8d 50.0%,#53768d 60.0%,#43728d 70.0%,#41718d 71.0%,#336e8d 78.0%,#2d6d8d 80.0%,#246c8d 83.0%,#186a8d 86.0%,#0c698d 87.8%,#04698d 88.6%,#00698d 89.0%,#00688d 90.0%,#00638d 100.0%)"></i><i style="height:2px;background:linear-gradient(90deg,#8b8b8b 0.0%,#83878b 10.0%,#7b848b 20.0%,#73808b 30.0%,#697c8b 40.0%,#5e788b 50.0%,#52748b 60.0%,#42708b 70.0%,#41708b 70.9%,#326c8b 77.9%,#2d6b8b 80.0%,#246a8b 82.9%,#17698b 85.9%,#0b688b 87.7%,#04678b 88.5%,#00678b 88.9%,#00678b 90.0%,#00628b 100.0%)"></i><i style="height:2px;background:linear-gradient(90deg,#898989 0.0%,#818589 10.0%,#7a8289 20.0%,#717e89 30.0%,#687b89 40.0%,#5d7789 50.0%,#507389 60.0%,#416e89 70.0%,#406e89 70.8%,#316b89 77.8%,#2c6a89 80.0%,#236989 82.8%,#176789 85.8%,#0b6689 87.6%,#046689 88.4%,#006689 88.8%,#006589 90.0%,#006089 100.0%)"></i><i style="height:2px;background:linear-gradient(90deg,#878787 0.0%,#808387 10.0%,#788087 20.0%,#6f7c87 30.0%,#667987 40.0%,#5b7587 50.0%,#4f7187 60.0%,#406d87 70.0%,#3f6c87 70.8%,#306987 77.8%,#2b6887 80.0%,#226787 82.8%,#166687 85.8%,#0b6587 87.6%,#046487 88.4%,#006487 88.8%,#006487 90.0%,#005f87 100.0%)"></i><i style="height:2px;background:linear-gradient(90deg,#858585 0.0%,#7e8185 10.0%,#767e85 20.0%,#6e7b85 30.0%,#647785 40.0%,#5a7385 50.0%,#4e6f85 60.0%,#3f6b85 70.0%,#3e6b85 70.7%,#2f6885 77.7%,#2a6785 80.0%,#226585 82.7%,#166485 85.7%,#0a6385 87.5%,#036385 88.3%,#006385 88.7%,#006285 90.0%,#005d85 100.0%)"></i><i style="height:2px;background:linear-gradient(90deg,#838383 0.0%,#7c7f83 10.0%,#747c83 20.0%,#6c7983 30.0%,#637583 40.0%,#587183 50.0%,#4c6d83 60.0%,#3e6983 70.0%,#3c6983 70.6%,#2f6683 77.6%,#296583 80.0%,#216483 82.6%,#156283 85.6%,#0a6283 87.4%,#036183 88.2%,#006183 88.6%,#006083 90.0%,#005c83 100.0%)"></i><i style="height:2px;background:linear-gradient(90deg,#818181 0.0%,#7a7d81 10.0%,#727a81 20.0%,#6a7781 30.0%,#617381 40.0%,#576f81 50.0%,#4b6b81 60.0%,#3c6781 70.0%,#3b6781 70.5%,#2e6481 77.5%,#286381 80.0%,#206281 82.5%,#156181 85.5%,#0a6081 87.3%,#036081 88.1%,#005f81 88.5%,#005f81 90.0%,#005a81 100.0%)"></i><i style="height:2px;background:linear-gradient(90deg,#7e7e7f 0.0%,#787b7f 10.0%,#70787f 20.0%,#68757f 30.0%,#5f717f 40.0%,#556d7f 50.0%,#4a6a7f 60.0%,#3b667f 70.0%,#3a657f 70.5%,#2d637f 77.5%,#27617f 80.0%,#20607f 82.5%,#145f7f 85.5%,#095e7f 87.3%,#035e7f 88.1%,#005e7f 88.5%,#005d7f 90.0%,#00587f 100.0%)"></i><i style="height:2px;background:linear-gradient(90deg,#7c7c7d 0.0%,#75797d 10.0%,#6e767d 20.0%,#66737d 30.0%,#5d6f7d 40.0%,#546b7d 50.0%,#48687d 60.0%,#3a647d 70.0%,#39647d 70.4%,#2c617d 77.4%,#26607d 80.0%,#1f5f7d 82.4%,#145d7d 85.4%,#095d7d 87.2%,#035c7d 88.0%,#005c7d 88.4%,#005b7d 90.0%,#00577d 100.0%)"></i><i style="height:2px;background:linear-gradient(90deg,#7a7a7b 0.0%,#73777b 10.0%,#6c747b 20.0%,#64707b 30.0%,#5c6d7b 40.0%,#52697b 50.0%,#47667b 60.0%,#38627b 70.0%,#2b5f7b 77.3%,#255e7b 80.0%,#1e5d7b 82.3%,#135c7b 85.3%,#095b7b 87.1%,#035a7b 87.9%,#005a7b 88.3%,#005a7b 90.0%,#00557b 100.0%)"></i><i style="height:2px;background:linear-gradient(90deg,#787878 0.0%,#717578 10.0%,#6a7178 20.0%,#626e78 30.0%,#5a6b78 40.0%,#506778 50.0%,#456478 60.0%,#376078 70.0%,#2a5d78 77.1%,#245c78 80.0%,#1e5b78 82.1%,#135a78 85.1%,#085978 86.9%,#035978 87.7%,#005978 88.1%,#005878 90.0%,#005378 100.0%)"></i><i style="height:1px;background:linear-gradient(90deg,#767677 0.0%,#6f7377 10.0%,#687077 20.0%,#616d77 30.0%,#586977 40.0%,#4f6677 50.0%,#446277 60.0%,#365e77 70.0%,#295c77 77.1%,#235b77 80.0%,#1d5a77 82.1%,#125877 85.1%,#085877 86.9%,#035777 87.7%,#005777 88.1%,#005677 90.0%,#005277 100.0%)"></i><i style="height:1px;background:linear-gradient(90deg,#757576 0.0%,#6e7276 10.0%,#676f76 20.0%,#606b76 30.0%,#576876 40.0%,#4e6576 50.0%,#436176 60.0%,#355d76 70.0%,#295b76 77.0%,#225a76 80.0%,#1d5976 82.0%,#125776 85.0%,#085776 86.8%,#035676 87.6%,#005676 88.0%,#005576 90.0%,#005176 100.0%)"></i><i style="height:1px;background:linear-gradient(90deg,#737374 0.0%,#6d7074 10.0%,#666d74 20.0%,#5f6a74 30.0%,#566774 40.0%,#4d6474 50.0%,#426074 60.0%,#355c74 69.9%,#285a74 76.9%,#215974 80.0%,#1c5874 81.9%,#125774 84.9%,#085674 86.7%,#035574 87.5%,#005574 87.9%,#005474 90.0%,#005074 100.0%)"></i><i style="height:1px;background:linear-gradient(90deg,#727273 0.0%,#6c6f73 10.0%,#656c73 20.0%,#5e6973 30.0%,#566673 40.0%,#4c6373 50.0%,#415f73 60.0%,#345b73 69.9%,#285973 76.9%,#215873 80.0%,#1c5773 81.9%,#115673 84.9%,#085573 86.7%,#035573 87.5%,#005473 87.9%,#005373 90.0%,#004f73 100.0%)"></i><i style="height:1px;background:linear-gradient(90deg,#717172 0.0%,#6b6e72 10.0%,#646b72 20.0%,#5d6872 30.0%,#556572 40.0%,#4b6172 50.0%,#415e72 60.0%,#345a72 69.8%,#275872 76.8%,#205772 80.0%,#1b5672 81.8%,#115572 84.8%,#075472 86.6%,#025472 87.4%,#005372 87.8%,#005272 90.0%,#004e72 100.0%)"></i><i style="height:1px;background:linear-gradient(90deg,#707071 0.0%,#696d71 10.0%,#636a71 20.0%,#5c6771 30.0%,#536471 40.0%,#4a6071 50.0%,#405d71 60.0%,#335971 69.7%,#275771 76.7%,#205571 80.0%,#1b5571 81.7%,#115471 84.7%,#075371 86.5%,#025371 87.3%,#005271 87.7%,#005171 90.0%,#004d71 100.0%)"></i><i style="height:1px;background:linear-gradient(90deg,#6e6e6f 0.0%,#686c6f 10.0%,#62696f 20.0%,#5a666f 30.0%,#52626f 40.0%,#495f6f 50.0%,#3f5c6f 60.0%,#32586f 69.6%,#32586f 70.0%,#26566f 76.6%,#1f546f 80.0%,#1b546f 81.6%,#10536f 84.6%,#07526f 86.4%,#02526f 87.2%,#00516f 87.6%,#00506f 90.0%,#004c6f 100.0%)"></i><i style="height:1px;background:linear-gradient(90deg,#6d6d6e 0.0%,#676a6e 10.0%,#60676e 20.0%,#59646e 30.0%,#51616e 40.0%,#485e6e 50.0%,#3e5b6e 60.0%,#32576e 69.5%,#31576e 70.0%,#26556e 76.5%,#1e536e 80.0%,#1a536e 81.5%,#10526e 84.5%,#07516e 86.3%,#02516e 87.1%,#00506e 87.5%,#004f6e 90.0%,#004b6e 100.0%)"></i><i style="height:1px;background:linear-gradient(90deg,#6c6c6d 0.0%,#66696d 10.0%,#5f666d 20.0%,#58636d 30.0%,#50606d 40.0%,#475d6d 50.0%,#3d596d 60.0%,#31566d 69.5%,#30566d 70.0%,#25546d 76.5%,#1e526d 80.0%,#1a526d 81.5%,#10516d 84.5%,#07506d 86.3%,#02506d 87.1%,#004f6d 87.5%,#004e6d 90.0%,#004a6d 100.0%)"></i><i style="height:1px;background:linear-gradient(90deg,#6a6a6b 0.0%,#64686b 10.0%,#5e656b 20.0%,#57626b 30.0%,#4f5f6b 40.0%,#475c6b 50.0%,#3c586b 60.0%,#30556b 69.4%,#2f556b 70.0%,#25536b 76.4%,#1d516b 80.0%,#19516b 81.4%,#10506b 84.4%,#074f6b 86.2%,#024f6b 87.0%,#004e6b 87.4%,#004d6b 90.0%,#00496b 100.0%)"></i><i style="height:1px;background:linear-gradient(90deg,#69696a 0.0%,#63666a 10.0%,#5d636a 20.0%,#56616a 30.0%,#4e5e6a 40.0%,#455a6a 50.0%,#3b576a 60.0%,#30546a 69.3%,#2f546a 70.0%,#24516a 76.3%,#1c506a 80.0%,#19506a 81.3%,#0f4e6a 84.3%,#064e6a 86.1%,#024d6a 86.9%,#004d6a 87.3%,#004c6a 90.0%,#00486a 100.0%)"></i><i style="height:1px;background:linear-gradient(90deg,#686869 0.0%,#626569 10.0%,#5c6269 20.0%,#555f69 30.0%,#4d5c69 40.0%,#445969 50.0%,#3a5669 60.0%,#2f5369 69.2%,#2e5369 70.0%,#245069 76.2%,#1c4f69 80.0%,#194f69 81.2%,#0f4d69 84.2%,#064d69 86.0%,#024c69 86.8%,#004c69 87.2%,#004b69 90.0%,#004769 100.0%)"></i><i style="height:1px;background:linear-gradient(90deg,#666667 0.0%,#606467 10.0%,#5a6167 20.0%,#535e67 30.0%,#4c5b67 40.0%,#435867 50.0%,#395567 60.0%,#2e5267 69.1%,#2d5167 70.0%,#234f67 76.1%,#1b4e67 80.0%,#184d67 81.1%,#0f4c67 84.1%,#064c67 85.9%,#024b67 86.7%,#004b67 87.1%,#004a67 90.0%,#004667 100.0%)"></i><i style="height:1px;background:linear-gradient(90deg,#656566 0.0%,#5f6266 10.0%,#595f66 20.0%,#525d66 30.0%,#4b5a66 40.0%,#425766 50.0%,#385366 60.0%,#2e5066 68.9%,#2c5066 70.0%,#224e66 75.9%,#1a4d66 80.0%,#184c66 80.9%,#0e4b66 83.9%,#064b66 85.7%,#024a66 86.5%,#004a66 86.9%,#004966 90.0%,#004566 100.0%)"></i><i style="height:1px;background:linear-gradient(90deg,#636364 0.0%,#5e6164 10.0%,#585e64 20.0%,#515b64 30.0%,#4a5864 40.0%,#415564 50.0%,#375264 60.0%,#2d4f64 68.8%,#2b4f64 70.0%,#224d64 75.8%,#194b64 80.0%,#174b64 80.8%,#0e4a64 83.8%,#064964 85.6%,#024964 86.4%,#004964 86.8%,#004864 90.0%,#004464 100.0%)"></i><i style="height:1px;background:linear-gradient(90deg,#626263 0.0%,#5c5f63 10.0%,#565d63 20.0%,#505a63 30.0%,#485763 40.0%,#405463 50.0%,#365163 60.0%,#2c4e63 68.7%,#2a4e63 70.0%,#214c63 75.7%,#184a63 80.0%,#174a63 80.7%,#0e4963 83.7%,#064863 85.5%,#024863 86.3%,#004863 86.7%,#004763 90.0%,#004363 100.0%)"></i><i style="height:1px;background:linear-gradient(90deg,#606062 0.0%,#5b5e62 10.0%,#555b62 20.0%,#4e5862 30.0%,#475662 40.0%,#3f5362 50.0%,#355062 60.0%,#2b4d62 68.6%,#294c62 70.0%,#214a62 75.6%,#184962 80.0%,#164962 80.6%,#0d4862 83.6%,#054762 85.4%,#024762 86.2%,#004762 86.6%,#004562 90.0%,#004262 100.0%)"></i><i style="height:1px;background:linear-gradient(90deg,#5f5f60 0.0%,#595c60 10.0%,#535a60 20.0%,#4d5760 30.0%,#465460 40.0%,#3e5160 50.0%,#344e60 60.0%,#2b4c60 68.4%,#284b60 70.0%,#204960 75.4%,#174860 80.0%,#164860 80.4%,#0d4760 83.4%,#054660 85.2%,#024660 86.0%,#004560 86.4%,#004460 90.0%,#004060 100.0%)"></i><i style="height:1px;background:linear-gradient(90deg,#5d5d5e 0.0%,#585b5e 10.0%,#52585e 20.0%,#4c555e 30.0%,#45535e 40.0%,#3d505e 50.0%,#334d5e 60.0%,#2a4a5e 68.3%,#274a5e 70.0%,#1f485e 75.3%,#16465e 80.0%,#0c455e 83.3%,#05455e 85.1%,#02445e 85.9%,#00445e 86.3%,#00435e 90.0%,#003f5e 100.0%)"></i><i style="height:1px;background:linear-gradient(90deg,#5c5c5d 0.0%,#56595d 10.0%,#51575d 20.0%,#4a545d 30.0%,#43515d 40.0%,#3b4e5d 50.0%,#324b5d 60.0%,#29495d 68.1%,#26485d 70.0%,#1f475d 75.1%,#15455d 80.0%,#0c445d 83.1%,#05435d 84.9%,#02435d 85.7%,#00435d 86.1%,#00425d 90.0%,#003e5d 100.0%)"></i><i style="height:1px;background:linear-gradient(90deg,#5a5a5b 0.0%,#55585b 10.0%,#4f555b 20.0%,#49525b 30.0%,#42505b 40.0%,#3a4d5b 50.0%,#314a5b 60.0%,#28485b 67.9%,#25475b 70.0%,#1e455b 74.9%,#14445b 79.9%,#0c435b 82.9%,#05425b 84.7%,#02425b 85.5%,#00425b 85.9%,#00405b 90.0%,#003d5b 100.0%)"></i><i style="height:1px;background:linear-gradient(90deg,#58585a 0.0%,#53565a 10.0%,#4e535a 20.0%,#47515a 30.0%,#414e5a 40.0%,#394b5a 50.0%,#30495a 60.0%,#27465a 67.7%,#24465a 70.0%,#1d445a 74.7%,#14425a 79.7%,#0b415a 82.7%,#05415a 84.5%,#02415a 85.3%,#00405a 85.7%,#003f5a 90.0%,#003b5a 100.0%)"></i><i style="height:1px;background:linear-gradient(90deg,#565658 0.0%,#515458 10.0%,#4c5258 20.0%,#464f58 30.0%,#3f4d58 40.0%,#384a58 50.0%,#2f4758 60.0%,#264558 67.5%,#234458 70.0%,#1d4358 74.5%,#134158 79.5%,#124158 80.0%,#0b4058 82.5%,#044058 84.3%,#013f58 85.1%,#003f58 85.5%,#003e58 90.0%,#003a58 100.0%)"></i><i style="height:1px;background:linear-gradient(90deg,#555556 0.0%,#505256 10.0%,#4a5056 20.0%,#444e56 30.0%,#3e4b56 40.0%,#364856 50.0%,#2d4656 60.0%,#264356 67.3%,#224356 70.0%,#1c4156 74.3%,#134056 79.3%,#113f56 80.0%,#0a3f56 82.3%,#043e56 84.1%,#013e56 84.9%,#003e56 85.3%,#003c56 90.0%,#003956 100.0%)"></i><i style="height:1px;background:linear-gradient(90deg,#535354 0.0%,#4e5154 10.0%,#494e54 20.0%,#434c54 30.0%,#3c4954 40.0%,#354754 50.0%,#2c4454 60.0%,#254254 67.1%,#214154 70.0%,#1b4054 74.1%,#123e54 79.1%,#103e54 80.0%,#0a3d54 82.1%,#043d54 83.9%,#013c54 84.7%,#003c54 85.1%,#003b54 90.0%,#003754 100.0%)"></i><i style="height:1px;background:linear-gradient(90deg,#515153 0.0%,#4c4f53 10.0%,#474d53 20.0%,#414a53 30.0%,#3b4853 40.0%,#344553 50.0%,#2b4253 60.0%,#244053 66.8%,#203f53 70.0%,#1b3e53 73.8%,#123d53 78.8%,#0f3c53 80.0%,#0a3c53 81.8%,#043b53 83.6%,#013b53 84.4%,#003b53 84.8%,#003953 90.0%,#003653 100.0%)"></i><i style="height:1px;background:linear-gradient(90deg,#4f4f51 0.0%,#4a4d51 10.0%,#454b51 20.0%,#404851 30.0%,#394651 40.0%,#324351 50.0%,#2a4151 60.0%,#233f51 66.5%,#1f3e51 70.0%,#1a3d51 73.5%,#113b51 78.5%,#0d3b51 80.0%,#093a51 81.5%,#043a51 83.3%,#013a51 84.1%,#003951 84.5%,#003851 90.0%,#003451 100.0%)"></i><i style="height:1px;background:linear-gradient(90deg,#4d4d4f 0.0%,#484b4f 10.0%,#43494f 20.0%,#3e464f 30.0%,#38444f 40.0%,#31424f 50.0%,#283f4f 60.0%,#223d4f 66.2%,#1d3c4f 70.0%,#193b4f 73.2%,#103a4f 78.2%,#0c394f 80.0%,#09394f 81.2%,#04384f 83.0%,#01384f 83.8%,#00384f 84.2%,#00364f 90.0%,#00334f 100.0%)"></i><i style="height:1px;background:linear-gradient(90deg,#4b4b4d 0.0%,#47494d 10.0%,#42474d 20.0%,#3c454d 30.0%,#36424d 40.0%,#2f404d 50.0%,#273d4d 60.0%,#213c4d 65.8%,#1c3a4d 70.0%,#183a4d 72.8%,#10384d 77.8%,#0b384d 80.0%,#08374d 80.8%,#03374d 82.6%,#01364d 83.4%,#00364d 83.8%,#00344d 90.0%,#00314d 100.0%)"></i><i style="height:1px;background:linear-gradient(90deg,#49494b 0.0%,#45474b 10.0%,#40454b 20.0%,#3a434b 30.0%,#34404b 40.0%,#2d3e4b 50.0%,#253b4b 60.0%,#203a4b 65.4%,#1b394b 70.0%,#17384b 72.4%,#0f374b 77.4%,#09364b 80.0%,#08364b 80.4%,#03354b 82.2%,#01354b 83.0%,#00354b 83.4%,#00334b 90.0%,#00304b 100.0%)"></i><i style="height:1px;background:linear-gradient(90deg,#474749 0.0%,#424549 10.0%,#3e4349 20.0%,#384149 30.0%,#333e49 40.0%,#2c3c49 50.0%,#243949 60.0%,#1f3849 65.0%,#193749 70.0%,#173649 72.0%,#0e3549 77.0%,#083449 80.0%,#033349 81.8%,#013349 82.6%,#003349 83.0%,#003149 90.0%,#002e49 100.0%)"></i><i style="height:1px;background:linear-gradient(90deg,#454546 0.0%,#404346 10.0%,#3c4146 20.0%,#363e46 30.0%,#313c46 40.0%,#2a3a46 50.0%,#223746 60.0%,#1e3646 64.5%,#183546 70.0%,#163446 71.5%,#0e3346 76.5%,#073246 79.5%,#063246 80.0%,#033246 81.3%,#013146 82.1%,#003146 82.5%,#002f46 90.0%,#002c46 100.0%)"></i><i style="height:1px;background:linear-gradient(90deg,#424244 0.0%,#3e4044 10.0%,#393e44 20.0%,#343c44 30.0%,#2f3a44 40.0%,#283844 50.0%,#203544 60.0%,#1d3444 64.0%,#163344 70.0%,#153344 71.0%,#0d3144 76.0%,#073044 79.0%,#043044 80.0%,#033044 80.8%,#013044 81.6%,#003044 82.0%,#002d44 90.0%,#002a44 100.0%)"></i><i style="height:1px;background:linear-gradient(90deg,#404042 0.0%,#3c3e42 10.0%,#373c42 20.0%,#323a42 30.0%,#2d3842 40.0%,#263542 50.0%,#1f3342 60.0%,#1b3242 63.4%,#143142 70.0%,#143142 70.4%,#0c2f42 75.4%,#062e42 78.4%,#032e42 80.0%,#012e42 81.0%,#002e42 81.4%,#002b42 90.0%,#002842 100.0%)"></i><i style="height:1px;background:linear-gradient(90deg,#3d3d3f 0.0%,#393b3f 10.0%,#35393f 20.0%,#30373f 30.0%,#2b353f 40.0%,#24333f 50.0%,#1d313f 60.0%,#1a303f 62.6%,#132f3f 69.6%,#122e3f 70.0%,#0b2d3f 74.6%,#062d3f 77.6%,#022c3f 79.4%,#012c3f 80.0%,#002c3f 80.6%,#00293f 90.0%,#00263f 100.0%)"></i><i style="height:1px;background:linear-gradient(90deg,#3b3b3d 0.0%,#37393d 10.0%,#32373d 20.0%,#2e353d 30.0%,#28333d 40.0%,#22313d 50.0%,#1b2e3d 60.0%,#192e3d 61.8%,#122c3d 68.8%,#102c3d 70.0%,#0b2b3d 73.8%,#052a3d 76.8%,#022a3d 78.6%,#012a3d 79.4%,#002a3d 79.8%,#00273d 90.0%,#00243d 100.0%)"></i><i style="height:1px;background:linear-gradient(90deg,#38383a 0.0%,#34363a 10.0%,#30343a 20.0%,#2b323a 30.0%,#26303a 40.0%,#202e3a 50.0%,#182c3a 60.0%,#182c3a 60.8%,#112a3a 67.8%,#0e2a3a 70.0%,#0a293a 72.8%,#05283a 75.8%,#02283a 77.6%,#01283a 78.4%,#00273a 78.8%,#00273a 80.0%,#00253a 90.0%,#00223a 100.0%)"></i><i style="height:1px;background:linear-gradient(90deg,#353537 0.0%,#313337 10.0%,#2d3137 20.0%,#282f37 30.0%,#232d37 40.0%,#1d2b37 50.0%,#162937 59.7%,#162937 60.0%,#102837 66.7%,#0b2737 70.0%,#092737 71.7%,#042637 74.7%,#022537 76.5%,#012537 77.3%,#002537 77.7%,#002537 80.0%,#002237 90.0%,#001f37 100.0%)"></i><i style="height:1px;background:linear-gradient(90deg,#313134 0.0%,#2e3034 10.0%,#2a2e34 20.0%,#262c34 30.0%,#212a34 40.0%,#1b2834 50.0%,#152734 58.3%,#132634 60.0%,#0e2534 65.3%,#082434 70.0%,#042334 73.3%,#022334 75.1%,#012334 75.9%,#002334 76.3%,#002234 80.0%,#001f34 90.0%,#001d34 100.0%)"></i><i style="height:1px;background:linear-gradient(90deg,#2e2e31 0.0%,#2b2c31 10.0%,#272b31 20.0%,#222931 30.0%,#1e2731 40.0%,#182531 50.0%,#132431 56.6%,#102331 60.0%,#0d2231 63.6%,#072131 68.6%,#062131 70.0%,#042131 71.6%,#012031 73.4%,#002031 74.2%,#002031 74.6%,#001f31 80.0%,#001c31 90.0%,#001a31 100.0%)"></i><i style="height:1px;background:linear-gradient(90deg,#2a2a2e 0.0%,#27292e 10.0%,#23272e 20.0%,#1f252e 30.0%,#1a242e 40.0%,#14222e 50.0%,#12212e 54.4%,#0d202e 60.0%,#0c202e 61.4%,#061e2e 66.4%,#031e2e 69.4%,#031e2e 70.0%,#011d2e 71.2%,#001d2e 72.0%,#001d2e 72.4%,#001b2e 80.0%,#00192e 90.0%,#00162e 100.0%)"></i><i style="height:1px;background:linear-gradient(90deg,#26262a 0.0%,#23252a 10.0%,#1f232a 20.0%,#1b212a 30.0%,#16202a 40.0%,#111e2a 50.0%,#101e2a 51.5%,#0a1c2a 58.5%,#091c2a 60.0%,#061b2a 63.5%,#031b2a 66.5%,#011a2a 68.3%,#001a2a 69.1%,#001a2a 69.5%,#001a2a 70.0%,#00182a 80.0%,#00152a 90.0%,#00132a 100.0%)"></i><i style="height:1px;background:linear-gradient(90deg,#212126 0.0%,#1e2026 10.0%,#1b1f26 20.0%,#171d26 30.0%,#121b26 40.0%,#0e1a26 47.6%,#0c1926 50.0%,#091926 54.6%,#051826 59.6%,#041826 60.0%,#021726 62.6%,#011726 64.4%,#001726 65.2%,#001626 65.6%,#001526 70.0%,#001326 80.0%,#001126 90.0%,#000e26 100.0%)"></i><i style="height:1px;background:linear-gradient(90deg,#1c1c21 0.0%,#191b21 10.0%,#161921 20.0%,#111821 30.0%,#0d1621 40.0%,#0b1621 41.9%,#071421 48.9%,#061421 50.0%,#041321 53.9%,#021321 56.9%,#011221 58.7%,#001221 59.5%,#001221 59.9%,#001021 70.0%,#000e21 80.0%,#000b21 90.0%,#000821 100.0%)"></i><i style="height:1px;background:linear-gradient(90deg,#15151b 0.0%,#12141b 10.0%,#0f131b 20.0%,#0a111b 30.0%,#09101b 33.1%,#060f1b 40.0%,#030e1b 45.1%,#010e1b 48.1%,#010d1b 49.9%,#000d1b 50.7%,#000d1b 51.1%,#000b1b 60.0%,#00091b 70.0%,#00071b 80.0%,#00041b 90.0%,#00021b 100.0%)"></i><i style="height:1px;background:linear-gradient(90deg,#0c0c15 0.0%,#090b15 10.0%,#060a15 17.1%,#050915 20.0%,#040815 24.1%,#020815 29.1%,#020715 30.0%,#010715 32.1%,#000715 33.9%,#000715 34.7%,#000715 35.1%,#000615 40.0%,#000415 50.0%,#000215 60.0%,#000115 70.0%,#000015 80.0%,#000015 90.0%,#000015 100.0%)"></i><i style="height:1px;background:linear-gradient(90deg,#00000b 0.0%,#00000b 10.0%,#00000b 20.0%,#00000b 30.0%,#00000b 40.0%,#00000b 50.0%,#00000b 60.0%,#00000b 70.0%,#00000b 80.0%,#00000b 90.0%,#00000b 100.0%)"></i><i style="height:1px;background:linear-gradient(90deg,#000000 0.0%,#000000 10.0%,#000000 20.0%,#000000 30.0%,#000000 40.0%,#000000 50.0%,#000000 60.0%,#000000 70.0%,#000000 80.0%,#000000 90.0%,#000000 100.0%)"></i></div>
    <svg class="a" style="left:246px;top:57px" width="14" height="14" viewBox="0 0 14 14"><circle cx="7.9" cy="7.8" r="5.3" fill="none" stroke="#0a1620" stroke-width="1.3"/></svg>
  </div>
  <div class="a" id="hue" style="left:276px;top:293px;width:19px;height:256px;background:linear-gradient(to bottom,rgb(255,0,0) 0px,rgb(255,0,0) 1px,rgb(255,0,0) 2px,rgb(255,0,0) 3px,rgb(255,0,35) 4px,rgb(255,0,58) 5px,rgb(255,0,73) 6px,rgb(255,0,85) 7px,rgb(255,0,95) 8px,rgb(255,0,104) 9px,rgb(255,0,113) 10px,rgb(255,0,120) 11px,rgb(255,0,127) 12px,rgb(255,0,134) 13px,rgb(255,0,140) 14px,rgb(255,0,146) 15px,rgb(255,0,152) 16px,rgb(255,0,157) 17px,rgb(255,0,162) 18px,rgb(255,0,167) 19px,rgb(255,0,172) 20px,rgb(255,0,177) 21px,rgb(255,0,181) 22px,rgb(255,0,186) 23px,rgb(255,0,190) 24px,rgb(255,0,194) 25px,rgb(255,0,198) 26px,rgb(255,0,202) 27px,rgb(255,0,206) 28px,rgb(255,0,210) 29px,rgb(255,0,214) 30px,rgb(255,0,217) 31px,rgb(255,0,221) 32px,rgb(255,0,224) 33px,rgb(255,0,228) 34px,rgb(255,0,231) 35px,rgb(255,0,234) 36px,rgb(255,0,238) 37px,rgb(255,0,241) 38px,rgb(255,0,244) 39px,rgb(255,0,247) 40px,rgb(255,0,250) 41px,rgb(255,0,253) 42px,rgb(254,0,255) 43px,rgb(251,0,255) 44px,rgb(249,0,255) 45px,rgb(246,0,255) 46px,rgb(243,0,255) 47px,rgb(240,0,255) 48px,rgb(238,0,255) 49px,rgb(235,0,255) 50px,rgb(232,0,255) 51px,rgb(229,0,255) 52px,rgb(226,0,255) 53px,rgb(223,0,255) 54px,rgb(220,0,255) 55px,rgb(216,0,255) 56px,rgb(213,0,255) 57px,rgb(210,0,255) 58px,rgb(207,0,255) 59px,rgb(203,0,255) 60px,rgb(200,0,255) 61px,rgb(196,0,255) 62px,rgb(193,0,255) 63px,rgb(189,0,255) 64px,rgb(185,0,255) 65px,rgb(181,0,255) 66px,rgb(177,0,255) 67px,rgb(173,0,255) 68px,rgb(169,0,255) 69px,rgb(164,0,255) 70px,rgb(160,0,255) 71px,rgb(155,0,255) 72px,rgb(150,0,255) 73px,rgb(145,0,255) 74px,rgb(140,0,255) 75px,rgb(134,0,255) 76px,rgb(128,0,255) 77px,rgb(122,0,255) 78px,rgb(116,0,255) 79px,rgb(109,0,255) 80px,rgb(101,0,255) 81px,rgb(93,0,255) 82px,rgb(83,0,255) 83px,rgb(79,0,255) 84px,rgb(74,0,255) 85px,rgb(68,0,255) 86px,rgb(62,0,255) 87px,rgb(56,0,255) 88px,rgb(49,73,255) 89px,rgb(45,93,255) 90px,rgb(40,102,255) 91px,rgb(35,109,255) 92px,rgb(29,117,255) 93px,rgb(21,123,255) 94px,rgb(0,130,255) 95px,rgb(0,136,255) 96px,rgb(0,141,255) 97px,rgb(0,147,255) 98px,rgb(0,152,255) 99px,rgb(0,157,255) 100px,rgb(0,162,255) 101px,rgb(0,166,255) 102px,rgb(0,171,255) 103px,rgb(0,175,255) 104px,rgb(0,179,255) 105px,rgb(0,183,255) 106px,rgb(0,187,255) 107px,rgb(0,191,255) 108px,rgb(0,195,255) 109px,rgb(0,199,255) 110px,rgb(0,202,255) 111px,rgb(0,206,255) 112px,rgb(0,209,255) 113px,rgb(0,213,255) 114px,rgb(0,216,255) 115px,rgb(0,219,255) 116px,rgb(0,223,255) 117px,rgb(0,226,255) 118px,rgb(0,229,255) 119px,rgb(0,232,255) 120px,rgb(0,235,255) 121px,rgb(0,238,255) 122px,rgb(0,241,255) 123px,rgb(0,244,255) 124px,rgb(0,247,255) 125px,rgb(0,249,255) 126px,rgb(0,252,255) 127px,rgb(0,255,255) 128px,rgb(0,255,253) 129px,rgb(0,255,250) 130px,rgb(0,255,248) 131px,rgb(0,255,245) 132px,rgb(0,255,243) 133px,rgb(0,255,240) 134px,rgb(0,255,237) 135px,rgb(0,255,235) 136px,rgb(0,255,232) 137px,rgb(0,255,229) 138px,rgb(0,255,227) 139px,rgb(0,255,224) 140px,rgb(0,255,221) 141px,rgb(0,255,218) 142px,rgb(0,255,215) 143px,rgb(0,255,212) 144px,rgb(0,255,209) 145px,rgb(0,255,206) 146px,rgb(0,255,203) 147px,rgb(0,255,200) 148px,rgb(0,255,196) 149px,rgb(0,255,193) 150px,rgb(0,255,190) 151px,rgb(0,255,186) 152px,rgb(0,255,183) 153px,rgb(0,255,179) 154px,rgb(0,255,175) 155px,rgb(0,255,171) 156px,rgb(0,255,167) 157px,rgb(0,255,163) 158px,rgb(0,255,159) 159px,rgb(0,255,155) 160px,rgb(0,255,150) 161px,rgb(0,255,146) 162px,rgb(0,255,141) 163px,rgb(0,255,136) 164px,rgb(0,255,131) 165px,rgb(0,255,125) 166px,rgb(0,255,119) 167px,rgb(0,255,113) 168px,rgb(0,255,106) 169px,rgb(0,255,99) 170px,rgb(0,254,91) 171px,rgb(0,252,82) 172px,rgb(0,251,72) 173px,rgb(0,250,60) 174px,rgb(0,248,44) 175px,rgb(0,247,0) 176px,rgb(0,244,0) 177px,rgb(0,240,0) 178px,rgb(0,237,0) 179px,rgb(0,234,0) 180px,rgb(65,255,0) 181px,rgb(81,255,0) 182px,rgb(93,255,0) 183px,rgb(104,255,0) 184px,rgb(113,255,0) 185px,rgb(122,255,0) 186px,rgb(130,255,0) 187px,rgb(137,255,0) 188px,rgb(144,255,0) 189px,rgb(151,255,0) 190px,rgb(157,255,0) 191px,rgb(163,255,0) 192px,rgb(169,255,0) 193px,rgb(174,255,0) 194px,rgb(179,255,0) 195px,rgb(185,255,0) 196px,rgb(190,255,0) 197px,rgb(194,255,0) 198px,rgb(199,255,0) 199px,rgb(204,255,0) 200px,rgb(208,255,0) 201px,rgb(212,255,0) 202px,rgb(216,255,0) 203px,rgb(221,255,0) 204px,rgb(225,255,0) 205px,rgb(228,255,0) 206px,rgb(232,255,0) 207px,rgb(236,255,0) 208px,rgb(240,255,0) 209px,rgb(243,255,0) 210px,rgb(247,255,0) 211px,rgb(251,255,0) 212px,rgb(254,255,0) 213px,rgb(255,253,0) 214px,rgb(255,250,0) 215px,rgb(255,247,0) 216px,rgb(255,244,0) 217px,rgb(255,241,0) 218px,rgb(255,237,0) 219px,rgb(255,234,0) 220px,rgb(255,231,0) 221px,rgb(255,228,0) 222px,rgb(255,224,0) 223px,rgb(255,221,0) 224px,rgb(255,217,0) 225px,rgb(255,213,0) 226px,rgb(255,210,0) 227px,rgb(255,206,0) 228px,rgb(255,202,0) 229px,rgb(255,198,0) 230px,rgb(255,194,0) 231px,rgb(255,190,0) 232px,rgb(255,186,0) 233px,rgb(255,181,0) 234px,rgb(255,177,0) 235px,rgb(255,172,0) 236px,rgb(255,167,0) 237px,rgb(255,162,0) 238px,rgb(255,157,0) 239px,rgb(255,152,0) 240px,rgb(255,146,0) 241px,rgb(255,140,0) 242px,rgb(255,134,0) 243px,rgb(255,127,0) 244px,rgb(255,120,0) 245px,rgb(255,113,0) 246px,rgb(255,104,0) 247px,rgb(255,95,0) 248px,rgb(255,85,0) 249px,rgb(255,73,0) 250px,rgb(255,58,0) 251px,rgb(255,35,0) 252px,rgb(255,0,0) 253px,rgb(255,0,0) 254px,rgb(255,0,0) 255px,rgb(255,0,0) 256px)"></div>
  <svg class="a" style="left:266.7px;top:394.5px" width="10" height="10" viewBox="0 0 10 10"><path d="M1.9 1.2 H3 L8.8 4.8 L3 8.4 H1.9 Q0.7 8.4 0.7 7.2 V2.4 Q0.7 1.2 1.9 1.2Z" fill="#e4e4e4" stroke="#1e1e1e" stroke-width="1.1" stroke-linejoin="round"/></svg>
  <svg class="a" style="left:294.6px;top:394.5px" width="10" height="10" viewBox="0 0 10 10"><path d="M8.1 1.2 H7 L1.2 4.8 L7 8.4 H8.1 Q9.3 8.4 9.3 7.2 V2.4 Q9.3 1.2 8.1 1.2Z" fill="#e4e4e4" stroke="#1e1e1e" stroke-width="1.1" stroke-linejoin="round"/></svg>
  <!-- HSB RGB -->
  <div class="radio" style="top:415px;background:#e4e4e4;border-color:#e4e4e4"></div><div class="a" style="left:318px;top:419px;width:5px;height:5px;border-radius:50%;background:#3a3a3a"></div>
  <div class="radio" style="top:439px"></div>
  <div class="radio" style="top:463px"></div>
  <div class="radio" style="top:491px"></div>
  <div class="radio" style="top:515px"></div>
  <div class="radio" style="top:539px"></div>
  <div class="t cpl" style="left:331px;top:415px">H:</div>
  <div class="t cpl" style="left:331px;top:439px">S:</div>
  <div class="t cpl" style="left:331px;top:463px">B:</div>
  <div class="t cpl" style="left:331px;top:491px">R:</div>
  <div class="t cpl" style="left:331px;top:515px">G:</div>
  <div class="t cpl" style="left:331px;top:539px">B:</div>
  <div class="fld f2" style="left:357px;top:412px;width:34px;border:1.5px solid #2a62d4;line-height:17px;padding-left:1.5px"><span style="background:#2a6bd8;display:inline-block;height:13px;line-height:13px;padding:0 0 0 1px;margin-left:-1px">211</span></div>
  <div class="fld f2" style="left:357px;top:436px;width:34px">99</div>
  <div class="fld f2" style="left:357px;top:460px;width:34px">75</div>
  <div class="fld f2" style="left:357px;top:488px;width:34px">1</div>
  <div class="fld f2" style="left:357px;top:512px;width:34px">93</div>
  <div class="fld f2" style="left:357px;top:536px;width:34px">191</div>
  <div class="t cpl" style="left:394px;top:416px">°</div>
  <div class="t cpl" style="left:394px;top:439px;font-size:12px">%</div>
  <div class="t cpl" style="left:394px;top:463px;font-size:12px">%</div>
</div>
</body></html>
